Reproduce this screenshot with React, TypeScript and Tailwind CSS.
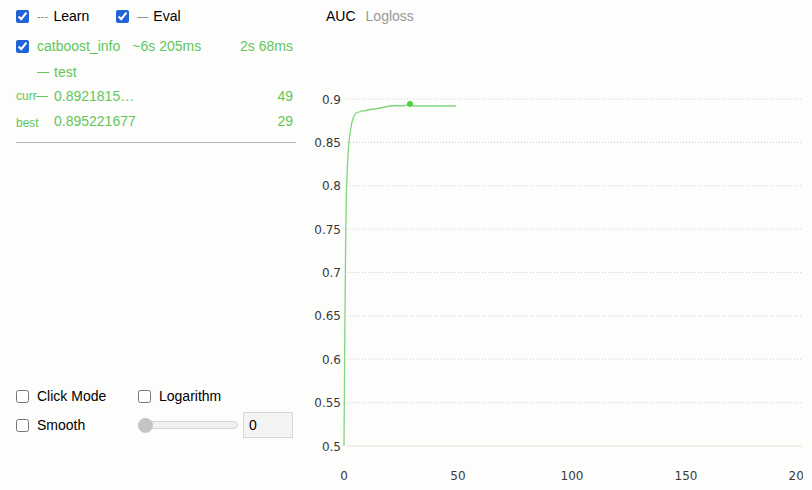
import React from "react";

const green = "text-[#62c65a]";

const yTicks = [0.9, 0.85, 0.8, 0.75, 0.7, 0.65, 0.6, 0.55, 0.5];
const xTicks = [0, 50, 100, 150, 200];

// page coords: x = 344 + iter * 2.28, y = 446 - (v - 0.5) * 867.5
const curve: [number, number][] = [
  [344, 446], [344.6, 360], [345.2, 290], [345.8, 230], [346.5, 190], [347.3, 168],
  [348.2, 152], [349.2, 140], [350.5, 130], [352, 122], [354, 116], [356, 113],
  [359, 112], [362, 111], [366, 110.5], [370, 109.5], [375, 109], [380, 108],
  [385, 107], [390, 106], [395, 105.5], [400, 106], [405, 105.5], [410, 104],
  [414, 106], [456, 106],
];

function Check({ checked }: { checked?: boolean }) {
  return (
    <input
      type="checkbox"
      defaultChecked={checked}
      className="w-[13px] h-[13px] m-0 accent-[#1f63d6] shrink-0"
    />
  );
}

function Chart() {
  const yOf = (v: number) => 446 - ((v - 0.5) / 0.05) * 43.375;
  return (
    <svg width={503} height={458} viewBox="300 32 503 458" className="block">
      {yTicks.map((v) => (
        <g key={v}>
          <line
            x1={347}
            x2={802}
            y1={yOf(v)}
            y2={yOf(v)}
            stroke={v === 0.5 ? "#e4e4d6" : "#cfcfcf"}
            strokeWidth={1}
            strokeDasharray={v === 0.5 ? undefined : "1 2"}
          />
          <text
            x={341}
            y={yOf(v) + 4.5}
            textAnchor="end"
            fontSize={12}
            fill="#3a3a3a"
            fontFamily="'DejaVu Sans', sans-serif"
          >
            {v}
          </text>
        </g>
      ))}
      {xTicks.map((t) => (
        <text
          key={t}
          x={344 + t * 2.28}
          y={480}
          textAnchor="middle"
          fontSize={12}
          fill="#3a3a3a"
          fontFamily="'DejaVu Sans', sans-serif"
        >
          {t}
        </text>
      ))}
      <polyline
        points={curve.map((p) => p.join(",")).join(" ")}
        fill="none"
        stroke="#80d67c"
        strokeWidth={1.3}
      />
      <circle cx={410} cy={104} r={3} fill="#4fcf48" />
    </svg>
  );
}

export default function App() {
  return (
    <div className="w-[812px] h-[490px] bg-[#fdfdfc] flex overflow-hidden font-['Liberation_Sans',Arial,sans-serif] text-[14px]">
      {/* left panel */}
      <div className="w-[300px] h-full flex flex-col pl-4 pr-[4px]">
        <div className="h-[32px] flex items-center">
          <Check checked />
          <span className="ml-[8px] text-[#777] text-[10px] tracking-[0.5px]">---</span>
          <span className="ml-[5px] text-black">Learn</span>
          <div className="ml-[27px] flex items-center">
            <Check checked />
            <span className="ml-[8px] text-[#777] text-[11px]">—</span>
            <span className="ml-[5px] text-black">Eval</span>
          </div>
        </div>
        <div className={`h-[28px] flex items-center ${green}`}>
          <Check checked />
          <span className="ml-[8px]">catboost_info</span>
          <span className="ml-[12px]">~6s 205ms</span>
          <span className="ml-auto mr-[3px]">2s 68ms</span>
        </div>
        <div className={`h-[24px] flex items-center pl-[21px] ${green}`}>
          <span className="text-[12px]">—</span>
          <span className="ml-[5px]">test</span>
        </div>
        <div className={`h-[24px] flex items-center ${green}`}>
          <span className="text-[12px] w-[38px] flex items-center">
            curr<span className="-ml-[1px]">—</span>
          </span>
          <span>0.8921815…</span>
          <span className="ml-auto mr-[3px]">49</span>
        </div>
        <div className={`h-[26px] flex items-center ${green}`}>
          <span className="text-[12px] w-[38px] pt-[3px]">best</span>
          <span>0.895221677</span>
          <span className="ml-auto mr-[3px]">29</span>
        </div>
        <div className="mt-[8px] h-px bg-[#b8b8b8] w-[280px]" />

        <div className="mt-auto pb-[52px] grid grid-cols-[122px_1fr] text-black">
          <div className="h-[26px] flex items-center">
            <Check />
            <span className="ml-[8px]">Click Mode</span>
          </div>
          <div className="h-[26px] flex items-center">
            <Check />
            <span className="ml-[8px]">Logarithm</span>
          </div>
          <div className="h-[26px] mt-[3px] flex items-center">
            <Check />
            <span className="ml-[8px]">Smooth</span>
          </div>
          <div className="h-[26px] mt-[3px] flex items-center">
            <div className="relative w-[100px] h-[8px] rounded-full border border-[#d6d6d6] bg-[#f0f0f0]">
              <div className="absolute -left-[1px] -top-[4px] w-[15px] h-[15px] rounded-full bg-[#c4c4c4]" />
            </div>
            <div className="ml-[5px] w-[50px] h-[26px] border border-[#d8d8d8] bg-[#f3f3f3] flex items-center pl-[5px]">
              0
            </div>
          </div>
        </div>
      </div>

      {/* right chart */}
      <div className="w-[512px] h-full flex flex-col">
        <div className="h-[32px] flex items-center pl-[26px]">
          <span className="text-black">AUC</span>
          <span className="ml-[10px] text-[#999]">Logloss</span>
        </div>
        <Chart />
      </div>
    </div>
  );
}
